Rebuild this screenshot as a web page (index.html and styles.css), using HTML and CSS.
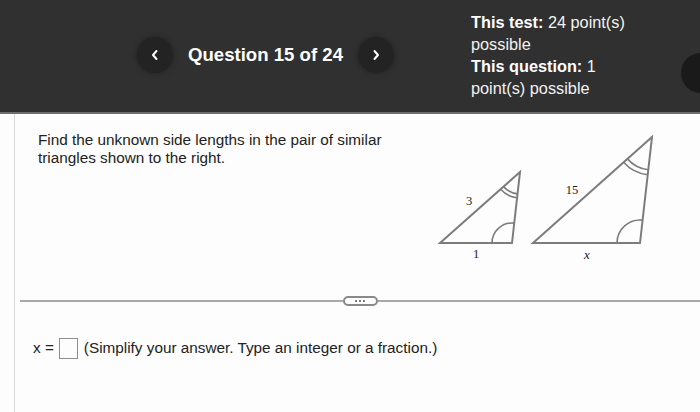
FILE: index.html
```html
<!DOCTYPE html>
<html lang="en">
<head>
<meta charset="utf-8">
<title>Question 15 of 24</title>
<link rel="stylesheet" href="styles.css">
</head>
<body>
<header class="header">
  <div class="nav">
    <button class="nav-btn" aria-label="Previous question">
      <svg width="10" height="12" viewBox="0 0 10 12"><polyline points="6.5,2 3,6 6.5,10" fill="none" stroke="#fff" stroke-width="2" stroke-linecap="round" stroke-linejoin="round"/></svg>
    </button>
    <span class="nav-title">Question 15 of 24</span>
    <button class="nav-btn" aria-label="Next question">
      <svg width="10" height="12" viewBox="0 0 10 12"><polyline points="3.5,2 7,6 3.5,10" fill="none" stroke="#fff" stroke-width="2" stroke-linecap="round" stroke-linejoin="round"/></svg>
    </button>
  </div>
  <div class="points">
    <span class="pt-line"><b>This test:</b> 24 point(s)</span>
    <span class="pt-line">possible</span>
    <span class="pt-line"><b>This question:</b> 1</span>
    <span class="pt-line">point(s) possible</span>
  </div>
  <div class="fab"></div>
</header>
<main class="main">
  <section class="question">
    <p class="prompt">Find the unknown side lengths in the pair of similar triangles shown to the right.</p>
    <svg class="figure" width="240" height="140" viewBox="0 0 240 140">
      <g fill="none" stroke="#7c7c7c" stroke-width="2" stroke-linejoin="miter">
        <polygon points="10,113 82,113 90,42"/>
        <polygon points="103,113 210,113 222,7"/>
      </g>
      <g fill="none" stroke="#7c7c7c" stroke-width="1.6">
        <path d="M62 113 A20 20 0 0 1 84.2 93.1"/>
        <path d="M73.5 56.6 A22 22 0 0 0 87.5 63.9"/>
        <path d="M70.6 59.3 A26 26 0 0 0 87.1 67.8"/>
        <path d="M187 113 A23 23 0 0 1 212.6 90.1"/>
        <path d="M197.4 28.9 A33 33 0 0 0 218.3 39.8"/>
        <path d="M193.6 32.3 A38 38 0 0 0 217.7 44.8"/>
      </g>
      <g class="labels" text-anchor="middle">
        <text x="39" y="75">3</text>
        <text x="46" y="128">1</text>
        <text x="142" y="64">15</text>
        <text x="157" y="129" class="var">x</text>
      </g>
    </svg>
  </section>
  <div class="divider">
    <span class="rule"></span>
    <span class="pill"><i></i><i></i><i></i></span>
    <span class="rule"></span>
  </div>
  <div class="answer">
    <span>x =</span>
    <span class="box"></span>
    <span>(Simplify your answer. Type an integer or a fraction.)</span>
  </div>
</main>
</body>
</html>
```
FILE: styles.css
```css
html, body {
  margin: 0;
  padding: 0;
  height: 100%;
  overflow: hidden;
  background: #fdfdfd;
  font-family: "Liberation Sans", Arial, sans-serif;
  color: #222;
}

.header {
  position: relative;
  height: 112px;
  background: #303030;
  border-bottom: 2px solid #6e6e6e;
  display: flex;
  align-items: flex-start;
  padding-left: 137px;
  box-sizing: content-box;
}

.nav {
  display: flex;
  align-items: center;
  gap: 15px;
  margin-top: 37px;
}

.nav-btn {
  width: 36px;
  height: 36px;
  border: none;
  border-radius: 50%;
  background: #232323;
  box-shadow: 0 0 4px 1px #262626;
  padding: 0;
  display: flex;
  align-items: center;
  justify-content: center;
}

.nav-title {
  color: #fff;
  font-size: 18.6px;
  font-weight: bold;
  white-space: nowrap;
}

.points {
  margin-left: 77px;
  padding-top: 11px;
  width: 175px;
  color: #f2f2f2;
  font-size: 16.3px;
  line-height: 22px;
}

.pt-line {
  display: block;
  white-space: nowrap;
}

.points b {
  color: #fff;
}

.fab {
  position: absolute;
  left: 681px;
  top: 53px;
  width: 40px;
  height: 40px;
  border-radius: 50%;
  background: #1a1a1a;
}

.main {
  margin-left: 14px;
  border-left: 1px solid #d9d9d9;
  height: calc(100% - 114px);
}

.question {
  display: flex;
  align-items: flex-start;
  padding: 16px 0 0 23px;
}

.prompt {
  margin: 0;
  padding-top: 1px;
  width: 360px;
  font-size: 15.3px;
  line-height: 18px;
}

.figure {
  display: block;
  margin-left: 32px;
}

.labels text {
  font-family: "Liberation Serif", "Times New Roman", serif;
  font-size: 12.5px;
  fill: #222;
}

.labels .var {
  font-style: italic;
  font-size: 13px;
}

.divider {
  display: flex;
  align-items: center;
  margin: 26px 0 0 5px;
  height: 10px;
}

.rule {
  flex: 1;
  height: 2px;
  background: #a8a8a8;
}

.pill {
  width: 31px;
  height: 6px;
  border: 2px solid #8a8a8a;
  border-radius: 6px;
  display: flex;
  align-items: center;
  justify-content: center;
  gap: 2px;
  background: #fff;
}

.pill i {
  width: 2px;
  height: 2px;
  background: #555;
  border-radius: 50%;
}

.answer {
  display: flex;
  align-items: center;
  margin-top: 31px;
  padding-left: 18px;
  font-size: 15.3px;
  height: 22px;
}

.box {
  width: 17px;
  height: 19px;
  border: 1px solid #8e8e8e;
  margin: 0 6px 0 5px;
}
```
